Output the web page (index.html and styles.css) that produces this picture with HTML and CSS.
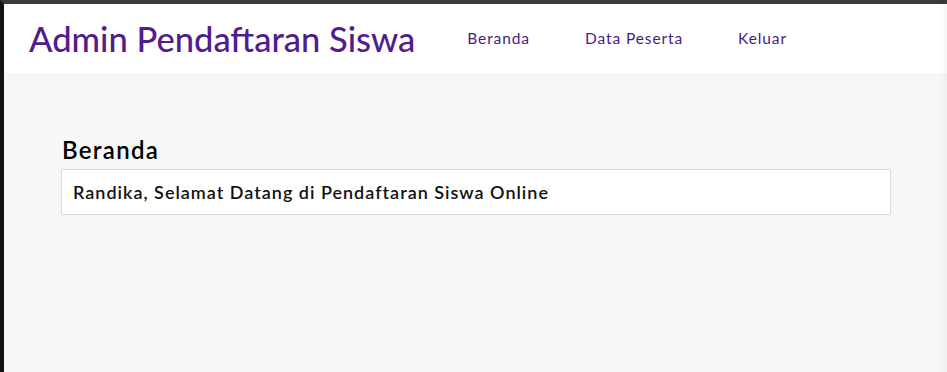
FILE: index.html
```html
<!DOCTYPE html>
<html lang="id">
<head>
    <meta charset="UTF-8">
    <meta name="viewport" content="width=device-width, initial-scale=1.0">
    <title>Admin Pendaftaran Siswa</title>
    <link rel="stylesheet" href="styles.css">
</head>
<body>
    <div class="header">
        <h1 class="brand">Admin Pendaftaran Siswa</h1>
        <ul class="nav">
            <li><a href="#">Beranda</a></li>
            <li><a href="#">Data Peserta</a></li>
            <li><a href="#">Keluar</a></li>
        </ul>
    </div>

    <div class="content">
        <h2 class="title">Beranda</h2>
        <div class="welcome">Randika, Selamat Datang di Pendaftaran Siswa Online</div>
    </div>
</body>
</html>
```

FILE: styles.css
```css
html, body {
    height: 100%;
}
body {
    font-family: "Lato", "Open Sans", sans-serif;
    margin: 0;
    padding: 0;
    background-color: #f7f7f7;
    border-top: 4px solid #3a3a3a;
    border-left: 4px solid #141414;
    box-sizing: border-box;
}
body::after {
    content: "";
    position: fixed;
    top: 4px;
    right: 0;
    bottom: 0;
    width: 8px;
    background: linear-gradient(to right, rgba(0, 0, 0, 0), rgba(0, 0, 0, 0.035));
}
.header {
    display: flex;
    align-items: center;
    height: 69px;
    padding-left: 25px;
    background-color: #fff;
}
.brand {
    margin: 0;
    font-size: 34.5px;
    font-weight: 500;
    color: #521c8f;
}
.nav {
    display: flex;
    list-style: none;
    margin: 0 0 2px 52px;
    padding: 0;
}
.nav li {
    margin-right: 55px;
}
.nav a {
    font-size: 15.5px;
    letter-spacing: 0.9px;
    color: #4a1a7f;
    text-decoration: none;
}
.content {
    padding: 62px 56px 0 57px;
}
.title {
    margin: 0 0 5px 1px;
    font-size: 24px;
    font-weight: 600;
    letter-spacing: 1.3px;
    color: #000;
}
.welcome {
    padding: 11px 11px;
    background-color: #fff;
    border: 1px solid #ddd;
    font-size: 18px;
    font-weight: 600;
    letter-spacing: 1px;
    color: #111;
}
```
